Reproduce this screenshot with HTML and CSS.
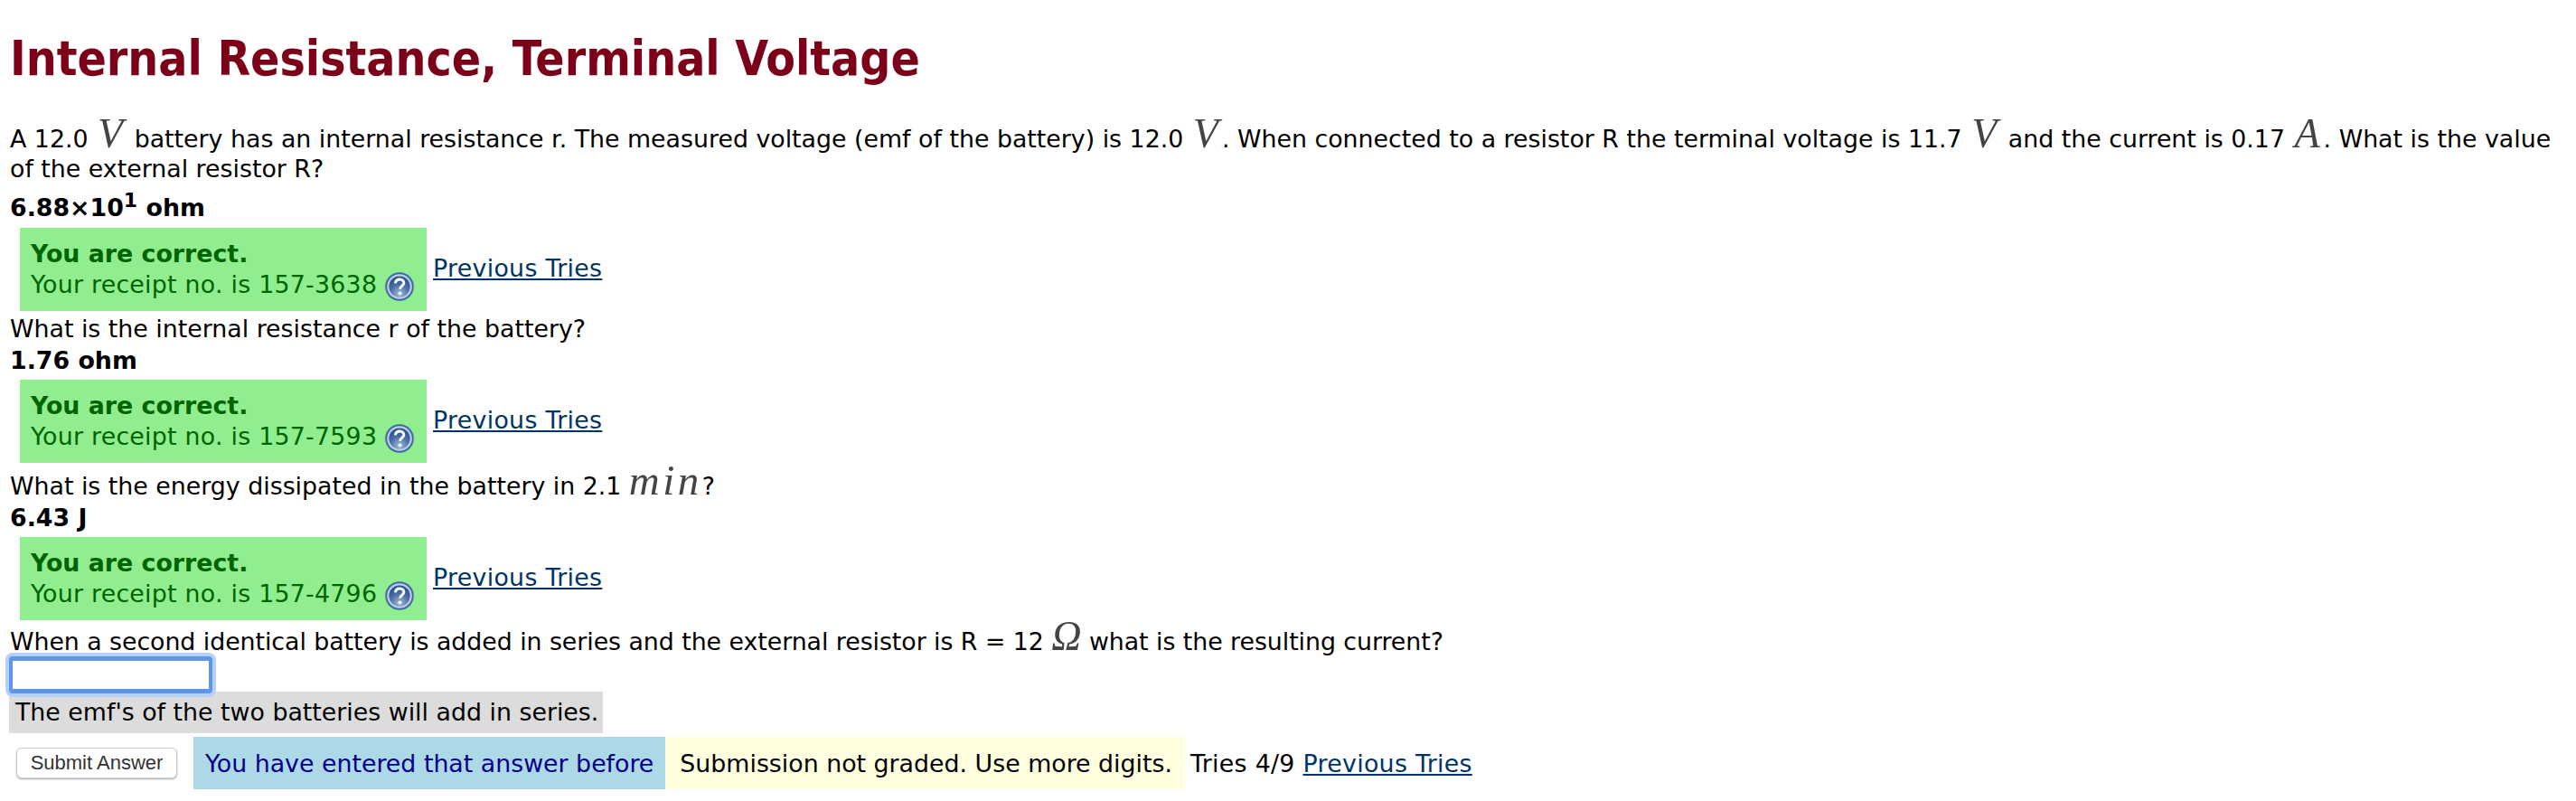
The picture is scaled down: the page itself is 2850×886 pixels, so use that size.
FILE: index.html
```html
<!DOCTYPE html>
<html lang="en">
<head>
    <meta charset="UTF-8">
    <title>Internal Resistance, Terminal Voltage</title>
    <link rel="stylesheet" href="styles.css">
</head>
<body>

    <h1>Internal Resistance, Terminal Voltage</h1>

    <p class="question first">A 12.0 <span class="unit">V</span> battery has an internal resistance r. The measured voltage (emf of the battery) is 12.0 <span class="unit">V</span>. When connected to a resistor R the terminal voltage is 11.7 <span class="unit">V</span> and the current is 0.17 <span class="unit">A</span>. What is the value<br>of the external resistor R?</p>
    <p class="answer tall">6.88×10<sup>1</sup> ohm</p>
    <div class="result">
        <div class="correct">
            <div class="correct-title">You are correct.</div>
            <div class="receipt">Your receipt no. is 157-3638
                <svg class="help" viewBox="0 0 32 32"><use href="#help-icon"/></svg>
            </div>
        </div>
        <a href="#">Previous Tries</a>
    </div>

    <p class="question">What is the internal resistance r of the battery?</p>
    <p class="answer">1.76 ohm</p>
    <div class="result">
        <div class="correct">
            <div class="correct-title">You are correct.</div>
            <div class="receipt">Your receipt no. is 157-7593
                <svg class="help" viewBox="0 0 32 32"><use href="#help-icon"/></svg>
            </div>
        </div>
        <a href="#">Previous Tries</a>
    </div>

    <p class="question after-min">What is the energy dissipated in the battery in 2.1 <span class="unit min">min</span>?</p>
    <p class="answer">6.43 J</p>
    <div class="result">
        <div class="correct">
            <div class="correct-title">You are correct.</div>
            <div class="receipt">Your receipt no. is 157-4796
                <svg class="help" viewBox="0 0 32 32"><use href="#help-icon"/></svg>
            </div>
        </div>
        <a href="#">Previous Tries</a>
    </div>

    <p class="question last">When a second identical battery is added in series and the external resistor is R = 12 <span class="unit omega">Ω</span> what is the resulting current?</p>
    <input class="entry" type="text">
    <div class="hint">The emf's of the two batteries will add in series.</div>

    <div class="submit-row">
        <button class="submit" type="button">Submit Answer</button>
        <span class="msg-blue">You have entered that answer before</span>
        <span class="msg-yellow">Submission not graded. Use more digits.</span>
        <span class="tries">Tries 4/9 <a href="#">Previous Tries</a></span>
    </div>

    <svg class="defs" width="0" height="0">
        <defs>
            <radialGradient id="help-fill" cx="50%" cy="85%" r="75%">
                <stop offset="0" stop-color="#a3bbdb"/>
                <stop offset="0.6" stop-color="#4a6da3"/>
                <stop offset="1" stop-color="#2c5592"/>
            </radialGradient>
            <g id="help-icon">
                <circle cx="16" cy="16" r="15.8" fill="#3f69a8"/>
                <circle cx="16" cy="16" r="13.8" fill="#bccde3"/>
                <circle cx="16" cy="16" r="11.6" fill="url(#help-fill)"/>
                <path d="M11.4 12.4c.3-2.9 2.3-4.5 4.8-4.5 2.8 0 4.6 1.7 4.6 4 0 3.3-4.2 3.6-4.3 6.900" fill="none" stroke="#fff" stroke-width="3"/>
                <circle cx="16.500" cy="23.300" r="1.900" fill="#fff"/>
            </g>
        </defs>
    </svg>

</body>
</html>
```

FILE: styles.css
```css
html,body,h1,p{
    margin: 0;
    padding: 0;
}

body{
    padding-left: 11px;
    background-color: #fff;
    color: #000;
    font-family: "DejaVu Sans", Verdana, sans-serif;
    font-size: 26.8px;
    line-height: 33px;
}

a{
    color: #003366;
    letter-spacing: 0.3px;
}

h1{
    padding-top: 33px;
    font-family: "DejaVu Sans Condensed", "DejaVu Sans", sans-serif;
    font-size: 53px;
    line-height: 64px;
    color: #7d0019;
}

.question{
    margin-top: 3px;
}

.question.first{
    margin-top: 40px;
}

.question.after-min{
    margin-top: 9px;
}

.question.last{
    margin-top: 7px;
    letter-spacing: -0.05px;
}

.answer{
    font-weight: bold;
    margin-top: 2px;
}

.answer.tall{
    margin-top: 10px;
    margin-bottom: 6px;
}

.answer sup{
    font-size: 22px;
    line-height: 0;
}

.unit{
    padding: 0 4px 0 2px;
    font-family: "Liberation Serif", serif;
    font-style: italic;
    font-size: 46px;
    line-height: 0;
    color: #444;
    filter: blur(0.5px);
}

.unit.min{
    padding: 0;
    font-size: 47px;
    letter-spacing: 3.5px;
}

.unit.omega{
    padding: 0;
}

.result{
    display: flex;
    align-items: center;
    gap: 7px;
    margin: 5px 0 0 11px;
}

.result a{
    margin-bottom: 3px;
}

.answer.tall + .result{
    margin-top: 0;
}

.correct{
    width: 450px;
    height: 92px;
    box-sizing: border-box;
    padding: 12px 12px 0;
    background-color: #90ee90;
    color: #006400;
}

.correct-title{
    font-weight: bold;
}

.receipt{
    margin-top: 1px;
    white-space: nowrap;
    letter-spacing: 0.25px;
}

.help{
    width: 32px;
    height: 32px;
    vertical-align: -9px;
}

.entry{
    position: relative;
    display: block;
    box-sizing: border-box;
    width: 225px;
    height: 41px;
    margin: 0 0 0 -1px;
    padding: 0;
    background-color: #fff;
    border-style: solid;
    border-width: 5px 4px;
    border-color: #5f95ec;
    border-radius: 4px;
    box-shadow: 0 0 0 4px #b6d1f8;
    outline: none;
}

.hint{
    display: table;
    margin: -2px 0 0 -1px;
    padding: 6px 5px 7px 7px;
    background-color: #dcdcdc;
}

.submit-row{
    display: flex;
    align-items: center;
    height: 58px;
    margin-top: 4px;
}

.submit{
    width: 178px;
    height: 34px;
    margin: 0 18px 0 7px;
    padding: 0;
    background-color: #fff;
    border: 1px solid #ccc;
    border-radius: 6px;
    box-shadow: 0 1px 2px #aaa;
    color: #333;
    font-family: "Liberation Sans", Arial, sans-serif;
    font-size: 22px;
}

.msg-blue,
.msg-yellow{
    display: flex;
    align-items: center;
    height: 58px;
}

.msg-blue{
    padding: 0 13px;
    background-color: #add8e6;
    color: #00008b;
}

.msg-yellow{
    padding: 0 14px 0 16px;
    background-color: #ffffe0;
}

.tries{
    margin-left: 6px;
    letter-spacing: 0.3px;
}

.defs{
    position: absolute;
}
```
